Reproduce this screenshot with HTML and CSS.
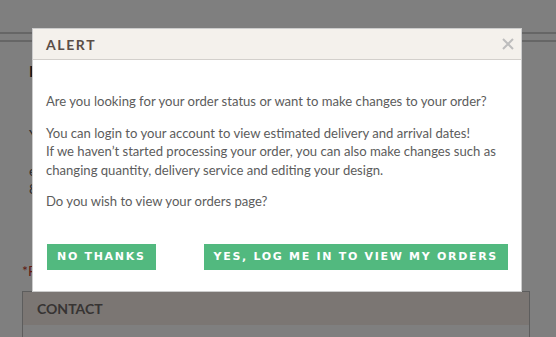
FILE: index.html
```html
<!DOCTYPE html>
<html lang="en">
<head>
<meta charset="UTF-8">
<meta name="viewport" content="width=device-width, initial-scale=1.0">
<title>Alert</title>
<link rel="stylesheet" href="styles.css">
</head>
<body>
<div class="page">
  <div class="topbar"></div>
  <div class="content">
    <h3 class="title">I</h3>
    <p class="intro">Y<br><br>e<br>8</p>
    <p class="required">*F</p>
    <div class="panel">
      <div class="panel-head">CONTACT</div>
      <div class="panel-body"></div>
    </div>
  </div>
</div>

<div id="overlay"></div>

<div class="dialog">
  <div class="dialog-head">
    <span class="dialog-title">ALERT</span>
    <svg class="close" width="12" height="12" viewBox="0 0 12 12">
      <path d="M1 1 L11 11 M11 1 L1 11" stroke="#bdbdbd" stroke-width="2" fill="none"/>
    </svg>
  </div>
  <div class="dialog-body">
    <p>Are you looking for your order status or want to make changes to your order?</p>
    <p>You can login to your account to view estimated delivery and arrival dates!<br>
    If we haven&rsquo;t started processing your order, you can also make changes such as<br>changing quantity, delivery service and editing your design.</p>
    <p>Do you wish to view your orders page?</p>
    <div class="buttons">
      <button class="btn">NO THANKS</button>
      <button class="btn">YES, LOG ME IN TO VIEW MY ORDERS</button>
    </div>
  </div>
</div>
</body>
</html>
```

FILE: styles.css
```css
body, html {
  height: 100%;
  margin: 0;
}

body {
  font-family: "Source Sans Pro", "Lato", "Noto Sans", sans-serif;
  background-color: #fff;
  overflow: hidden;
}

.topbar {
  height: 6px;
  margin-top: 32px;
  border-top: 2px solid #ccc;
  border-bottom: 2px solid #ccc;
}

.content {
  padding: 0 26px 0 22px;
}

.title {
  margin: 20px 0 0 7px;
  font-size: 15px;
  color: #333;
}

.intro {
  margin: 46px 0 0 7px;
  font-size: 14px;
  line-height: 18px;
  color: #555;
}

.required {
  margin: 64px 0 0 0;
  font-size: 14px;
  color: #c0392b;
}

.panel {
  margin-top: 12px;
  border: 1px solid #bbb;
  border-bottom: none;
}

.panel-head {
  background-color: #f6ede7;
  padding: 8px 14px;
  font-size: 14px;
  font-weight: bold;
  color: #6e6866;
}

.panel-body {
  height: 12px;
}

#overlay {
  position: fixed;
  top: 0;
  left: 0;
  width: 100%;
  height: 100%;
  background-color: rgba(0, 0, 0, 0.5);
}

.dialog {
  position: fixed;
  top: 28px;
  left: 32px;
  width: 488px;
  background-color: #fff;
  border: 1px solid #ccc;
}

.dialog-head {
  display: flex;
  justify-content: space-between;
  align-items: center;
  height: 30px;
  padding: 0 7px 0 13px;
  background-color: #f4f1ec;
  border-bottom: 1px solid #d3d0cc;
}

.dialog-title {
  font-size: 14px;
  font-weight: bold;
  letter-spacing: 1.6px;
  color: #5a4e47;
}

.dialog-body {
  padding: 32px 13px 21px 13px;
  font-size: 13.1px;
  line-height: 18.5px;
  color: #5c5c5c;
}

.dialog-body p {
  margin: 0 0 13px 0;
}

.buttons {
  display: flex;
  justify-content: space-between;
  margin-top: 33px;
  padding: 0 0 0 1px;
}

.btn {
  height: 26px;
  padding: 0 10px 0 10px;
  border: none;
  background-color: #52b97f;
  color: #fff;
  font-family: "DejaVu Sans", sans-serif;
  font-size: 11px;
  font-weight: bold;
  letter-spacing: 1.7px;
}
```
